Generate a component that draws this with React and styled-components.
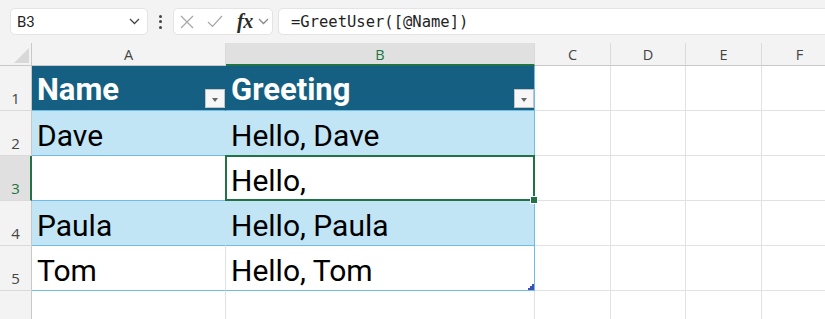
import React from 'react';
import styled, { createGlobalStyle, css } from 'styled-components';

const Global = createGlobalStyle`
  html, body { margin: 0; padding: 0; background: #fff; overflow: hidden; }
  body { width: 825px; height: 319px; }
`;

const Window = styled.div`
  width: 825px;
  height: 319px;
  overflow: hidden;
  background: #fff;
  font-family: Roboto, "Noto Sans", sans-serif;
`;

const Toolbar = styled.div`
  display: flex;
  align-items: center;
  width: 845px;
  height: 43px;
  box-sizing: border-box;
  padding: 8px 0 8px 10px;
  background: #f3f3f3;
`;

const Box = styled.div`
  height: 27px;
  box-sizing: border-box;
  background: #fff;
  border: 1px solid #e4e4e4;
  border-radius: 5px;
  display: flex;
  align-items: center;
  flex-shrink: 0;
`;

const NameBox = styled(Box)`
  width: 138px;
  padding: 0 7px 0 6px;
  justify-content: space-between;
  font-size: 15px;
  color: #1f1f1f;
`;

const Dots = styled.div`
  width: 25px;
  flex-shrink: 0;
  display: flex;
  flex-direction: column;
  align-items: center;
  gap: 2.5px;
  span {
    width: 3px;
    height: 3px;
    border-radius: 50%;
    background: #444;
  }
`;

const FxBox = styled(Box)`
  width: 100px;
  margin-right: 5px;
  padding-left: 6px;
`;

const IconSlot = styled.div`
  margin-left: ${p => p.$ml || 0}px;
  display: flex;
  align-items: center;
  flex-shrink: 0;
`;

const FxText = styled.span`
  font-family: "Liberation Serif", serif;
  font-style: italic;
  font-weight: bold;
  font-size: 20px;
  color: #2b2b2b;
  letter-spacing: -0.5px;
  line-height: 1;
  margin-top: -2px;
`;

const FormulaBox = styled(Box)`
  flex: 1 1 auto;
  padding-left: 12px;
  font-family: "DejaVu Sans Mono", "Liberation Mono", monospace;
  font-size: 15.5px;
  color: #1f1f1f;
`;

const Sheet = styled.div`
  display: grid;
  grid-template-columns: 32px 194px 309px 76px 75px 76px 76px;
  grid-template-rows: 23px repeat(6, 45px);
`;

const Corner = styled.div`
  background: #f3f3f3;
  border-right: 1px solid #c8c8c8;
  border-bottom: 1px solid #c8c8c8;
  box-sizing: border-box;
  display: flex;
  align-items: flex-end;
  justify-content: flex-end;
  padding: 0 2px 2px 0;
  &::before {
    content: '';
    width: 0;
    height: 0;
    border-left: 15px solid transparent;
    border-bottom: 15px solid #d8d8d8;
  }
`;

const ColHead = styled.div`
  box-sizing: border-box;
  background: ${p => (p.$selected ? '#e0e0e0' : '#f3f3f3')};
  border-right: 1px solid #dadada;
  border-bottom: ${p => (p.$selected ? '2px solid #217346' : '1px solid #c8c8c8')};
  display: flex;
  align-items: center;
  justify-content: center;
  font-family: "Open Sans", "Noto Sans", sans-serif;
  font-size: 14.5px;
  color: ${p => (p.$selected ? '#217346' : '#444')};
  padding-top: ${p => (p.$selected ? '1px' : '0')};
`;

const RowHead = styled.div`
  box-sizing: border-box;
  background: ${p => (p.$selected ? '#e0e0e0' : '#f3f3f3')};
  border-right: ${p => (p.$selected ? '2px solid #217346' : '1px solid #c8c8c8')};
  border-bottom: 1px solid #dadada;
  display: flex;
  align-items: flex-end;
  justify-content: center;
  padding-bottom: 3px;
  padding-left: ${p => (p.$selected ? '1px' : '0')};
  font-family: "Open Sans", "Noto Sans", sans-serif;
  font-size: 15px;
  line-height: 1.2;
  color: ${p => (p.$selected ? '#217346' : '#444')};
`;

const BLUE_LINE = '#6dbde8';
const GRID = '#e1e1e1';

const kinds = {
  head: css`
    background: #156082;
    color: #fff;
    font-weight: 700;
    font-size: 31px;
    border-bottom: 1px solid ${BLUE_LINE};
  `,
  band: css`
    background: #c1e5f5;
    color: #000;
    border-bottom: 1px solid ${BLUE_LINE};
  `,
  plain: css`
    background: #fff;
    color: #000;
    border-bottom: 1px solid ${BLUE_LINE};
  `,
  empty: css`
    background: #fff;
    border-bottom: 1px solid ${GRID};
  `,
};

const rightBorder = p => {
  if (p.$edge) return BLUE_LINE;
  if (p.$kind === 'head') return '#156082';
  if (p.$kind === 'band') return '#c1e5f5';
  return GRID;
};

const Cell = styled.div`
  position: relative;
  box-sizing: border-box;
  display: flex;
  align-items: flex-end;
  justify-content: space-between;
  padding: 0 0 2px 5px;
  font-family: Roboto, "Noto Sans", sans-serif;
  font-size: 30px;
  line-height: 1.2;
  border-right: 1px solid ${rightBorder};
  ${p => kinds[p.$kind]}
  ${p =>
    p.$selected &&
    css`
      &::after {
        content: '';
        position: absolute;
        top: -1px;
        left: -1px;
        right: -1px;
        bottom: -1px;
        border: 2px solid #217346;
        pointer-events: none;
      }
    `}
`;

const CellText = styled.span`
  line-height: 1.15;
`;

const FillHandle = styled.span`
  position: absolute;
  right: -4px;
  bottom: -4px;
  width: 6px;
  height: 6px;
  background: #217346;
  border: 1px solid #fff;
  z-index: 2;
`;

const ResizeHandle = styled.svg`
  position: absolute;
  right: 0;
  bottom: 0;
`;

const FilterButton = styled.span`
  width: 20px;
  height: 19px;
  box-sizing: border-box;
  background: #f7f7f7;
  border: 1px solid #c4c4c4;
  display: flex;
  align-items: center;
  justify-content: center;
  padding-top: 2px;
  flex-shrink: 0;
  &::before {
    content: '';
    width: 0;
    height: 0;
    border-left: 3.5px solid transparent;
    border-right: 3.5px solid transparent;
    border-top: 4px solid #666;
  }
`;

const Chevron = ({ color = '#444', w = 11 }) => (
  <svg width={w} height="7" viewBox="0 0 11 7">
    <path d="M1 1 L5.5 5.5 L10 1" fill="none" stroke={color} strokeWidth="1.3" />
  </svg>
);

const XIcon = () => (
  <svg width="14" height="14" viewBox="0 0 14 14">
    <path d="M1 1 L13 13 M13 1 L1 13" stroke="#a6a6a6" strokeWidth="1.2" fill="none" />
  </svg>
);

const CheckIcon = () => (
  <svg width="16" height="13" viewBox="0 0 16 13">
    <path d="M1 7 L5.5 11.5 L15 1" stroke="#a6a6a6" strokeWidth="1.2" fill="none" />
  </svg>
);

const cols = ['A', 'B', 'C', 'D', 'E', 'F'];

const rows = [
  { n: 1, kind: 'head', a: 'Name', b: 'Greeting' },
  { n: 2, kind: 'band', a: 'Dave', b: 'Hello, Dave' },
  { n: 3, kind: 'plain', a: '', b: 'Hello,', selected: true },
  { n: 4, kind: 'band', a: 'Paula', b: 'Hello, Paula' },
  { n: 5, kind: 'plain', a: 'Tom', b: 'Hello, Tom', last: true },
  { n: 6, kind: 'empty' },
];

export default function App() {
  return (
    <Window>
      <Global />
      <Toolbar>
        <NameBox>
          <span>B3</span>
          <Chevron />
        </NameBox>
        <Dots>
          <span />
          <span />
          <span />
        </Dots>
        <FxBox>
          <IconSlot>
            <XIcon />
          </IconSlot>
          <IconSlot $ml={13}>
            <CheckIcon />
          </IconSlot>
          <IconSlot $ml={14}>
            <FxText>fx</FxText>
          </IconSlot>
          <IconSlot $ml={5}>
            <Chevron color="#888" w={11} />
          </IconSlot>
        </FxBox>
        <FormulaBox>=GreetUser([@Name])</FormulaBox>
      </Toolbar>
      <Sheet>
        <Corner />
        {cols.map(c => (
          <ColHead key={c} $selected={c === 'B'}>
            {c}
          </ColHead>
        ))}
        {rows.map(r => (
          <React.Fragment key={r.n}>
            <RowHead $selected={r.selected}>{r.n}</RowHead>
            {r.kind === 'empty' ? (
              <>
                <Cell $kind="empty" />
                <Cell $kind="empty" />
              </>
            ) : (
              <>
                <Cell $kind={r.kind}>
                  <CellText>{r.a}</CellText>
                  {r.kind === 'head' && <FilterButton />}
                </Cell>
                <Cell $kind={r.kind} $edge $selected={r.selected}>
                  <CellText>{r.b}</CellText>
                  {r.kind === 'head' && <FilterButton />}
                  {r.selected && <FillHandle />}
                  {r.last && (
                    <ResizeHandle width="6" height="6" viewBox="0 0 6 6">
                      <path d="M6 0 L6 6 L0 6 L0 4 L2 4 L2 2 L4 2 L4 0 Z" fill="#3b4fb8" />
                    </ResizeHandle>
                  )}
                </Cell>
              </>
            )}
            {cols.slice(2).map(c => (
              <Cell key={c} $kind="empty" />
            ))}
          </React.Fragment>
        ))}
      </Sheet>
    </Window>
  );
}
